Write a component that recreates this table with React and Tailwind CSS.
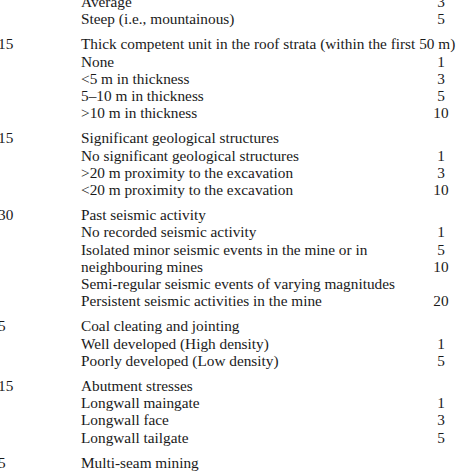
const groups = [
  {
    weight: '',
    rows: [
      ['Average', '3'],
      ['Steep (i.e., mountainous)', '5'],
    ],
  },
  {
    weight: '15',
    rows: [
      ['Thick competent unit in the roof strata (within the first 50\u00a0m)', ''],
      ['None', '1'],
      ['<5 m in thickness', '3'],
      ['5\u201310\u00a0m in thickness', '5'],
      ['>10\u00a0m in thickness', '10'],
    ],
  },
  {
    weight: '15',
    rows: [
      ['Significant geological structures', ''],
      ['No significant geological structures', '1'],
      ['>20 m proximity to the excavation', '3'],
      ['<20 m proximity to the excavation', '10'],
    ],
  },
  {
    weight: '30',
    rows: [
      ['Past seismic activity', ''],
      ['No recorded seismic activity', '1'],
      ['Isolated minor seismic events in the mine or in', '5'],
      ['neighbouring mines', '10'],
      ['Semi-regular seismic events of varying magnitudes', ''],
      ['Persistent seismic activities in the mine', '20'],
    ],
  },
  {
    weight: '5',
    rows: [
      ['Coal cleating and jointing', ''],
      ['Well developed (High density)', '1'],
      ['Poorly developed (Low density)', '5'],
    ],
  },
  {
    weight: '15',
    rows: [
      ['Abutment stresses', ''],
      ['Longwall maingate', '1'],
      ['Longwall face', '3'],
      ['Longwall tailgate', '5'],
    ],
  },
  {
    weight: '5',
    rows: [['Multi-seam mining', '']],
  },
]

export default function App() {
  return (
    <div className="w-[474px] h-[474px] overflow-hidden bg-white text-[#1a1a1a] font-['Liberation_Serif',serif] text-[15.3px] leading-[17.2px]">
      <div className="-mt-[7px] flex flex-col gap-[8px]">
        {groups.map((g, gi) => (
          <div key={gi} className="flex">
            <div className="w-[83px] -ml-[2px] shrink-0">{g.weight}</div>
            <div className="flex-1 min-w-0 flex flex-col">
              {g.rows.map(([label, val], ri) => (
                <div key={ri} className="flex">
                  <div className="flex-1 min-w-0 whitespace-nowrap">{label}</div>
                  <div className="w-[34px] mr-[16px] shrink-0 text-center">{val}</div>
                </div>
              ))}
            </div>
          </div>
        ))}
      </div>
    </div>
  )
}
